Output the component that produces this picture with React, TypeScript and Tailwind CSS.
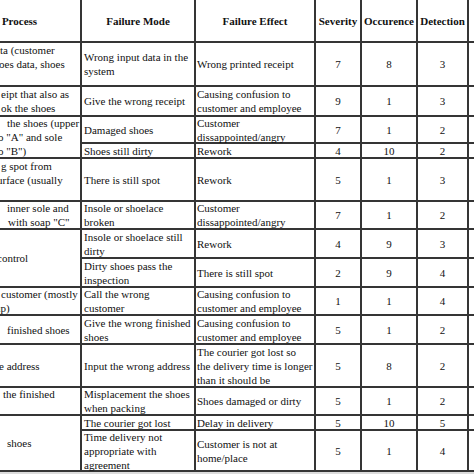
type Sub = {
  mode: string[];
  effect: string[];
  sev: string;
  occ: string;
  det: string;
  h: string;
};

type Line = { t: string; cls: string };

type Group = {
  proc: Line[];
  rows: Sub[];
};

const groups: Group[] = [
  {
    proc: [
      { t: "ta (customer", cls: "ml-[41px]" },
      { t: "oes data, shoes", cls: "ml-[40px]" },
      { t: "\u00a0", cls: "" },
    ],
    rows: [
      { mode: ["Wrong input data in the", "system"], effect: ["Wrong printed receipt"], sev: "7", occ: "8", det: "3", h: "h-[44px]" },
    ],
  },
  {
    proc: [
      { t: "eipt that also as", cls: "ml-[42px]" },
      { t: "ok the shoes", cls: "ml-[42px]" },
    ],
    rows: [
      { mode: ["Give the wrong receipt"], effect: ["Causing confusion to", "customer and employee"], sev: "9", occ: "1", det: "3", h: "h-[30px]" },
    ],
  },
  {
    proc: [
      { t: "the shoes (upper", cls: "ml-[48px]" },
      { t: "o \"A\" and sole", cls: "ml-[39px]" },
      { t: "o \"B\")", cls: "ml-[39px]" },
    ],
    rows: [
      { mode: ["Damaged shoes"], effect: ["Customer", "dissappointed/angry"], sev: "7", occ: "1", det: "2", h: "h-[27px]" },
      { mode: ["Shoes still dirty"], effect: ["Rework"], sev: "4", occ: "10", det: "2", h: "h-[15px]" },
    ],
  },
  {
    proc: [
      { t: "g spot from", cls: "ml-[42px]" },
      { t: "urface (usually", cls: "ml-[38px]" },
      { t: "\u00a0", cls: "" },
    ],
    rows: [
      { mode: ["There is still spot"], effect: ["Rework"], sev: "5", occ: "1", det: "3", h: "h-[43px]" },
    ],
  },
  {
    proc: [
      { t: "inner sole and", cls: "ml-[48px]" },
      { t: "with soap \"C\"", cls: "ml-[49px]" },
    ],
    rows: [
      { mode: ["Insole or shoelace", "broken"], effect: ["Customer", "dissappointed/angry"], sev: "7", occ: "1", det: "2", h: "h-[28px]" },
    ],
  },
  {
    proc: [{ t: "control", cls: "ml-[38px]" }],
    rows: [
      { mode: ["Insole or shoelace still", "dirty"], effect: ["Rework"], sev: "4", occ: "9", det: "3", h: "h-[29px]" },
      { mode: ["Dirty shoes pass the", "inspection"], effect: ["There is still spot"], sev: "2", occ: "9", det: "4", h: "h-[29px]" },
    ],
  },
  {
    proc: [
      { t: "customer (mostly", cls: "ml-[42px]" },
      { t: "up)", cls: "ml-[36px]" },
    ],
    rows: [
      { mode: ["Call the wrong", "customer"], effect: ["Causing confusion to", "customer and employee"], sev: "1", occ: "1", det: "4", h: "h-[28px]" },
    ],
  },
  {
    proc: [{ t: "finished shoes", cls: "ml-[48px]" }],
    rows: [
      { mode: ["Give the wrong finished", "shoes"], effect: ["Causing confusion to", "customer and employee"], sev: "5", occ: "1", det: "2", h: "h-[29px]" },
    ],
  },
  {
    proc: [{ t: "e address", cls: "ml-[40px]" }],
    rows: [
      { mode: ["Input the wrong address"], effect: ["The courier got lost so", "the delivery time is longer", "than it should be"], sev: "5", occ: "8", det: "2", h: "h-[43px]" },
    ],
  },
  {
    proc: [
      { t: "the finished", cls: "ml-[44px]" },
      { t: "\u00a0", cls: "" },
    ],
    rows: [
      { mode: ["Misplacement the shoes", "when packing"], effect: ["Shoes damaged or dirty"], sev: "5", occ: "1", det: "2", h: "h-[28px]" },
    ],
  },
  {
    proc: [{ t: "shoes", cls: "ml-[48px]" }],
    rows: [
      { mode: ["The courier got lost"], effect: ["Delay in delivery"], sev: "5", occ: "10", det: "5", h: "h-[15px]" },
      { mode: ["Time delivery not", "appropriate with", "agreement"], effect: ["Customer is not at", "home/place"], sev: "5", occ: "1", det: "4", h: "h-[41px]" },
    ],
  },
];

const line = "border-[#353535]";

// lines are centred on a zero-height box so that tall text never stretches the row
const Lines = ({ lines }: { lines: Line[] }) => (
  <div className="h-0 flex flex-col justify-center">
    {lines.map((l, i) => (
      <div key={i} className={`whitespace-nowrap ${l.cls}`}>
        {l.t}
      </div>
    ))}
  </div>
);

const TextCell = ({ lines, w, pad }: { lines: string[]; w: string; pad: string }) => (
  <div className={`${w} shrink-0 h-full border-r-2 ${line} flex flex-col justify-center ${pad}`}>
    <Lines lines={lines.map((t) => ({ t, cls: "" }))} />
  </div>
);

const NumCell = ({ v, w }: { v: string; w: string }) => (
  <div className={`${w} shrink-0 h-full border-r-2 ${line} flex items-center justify-center`}>{v}</div>
);

export default function App() {
  return (
    <div className="w-[474px] h-[474px] overflow-hidden bg-white text-[#111] font-['Liberation_Serif','Times_New_Roman',serif] text-[11px] leading-[14px]">
      <div className="w-[515px] -ml-[41px] flex flex-col">
        {/* header */}
        <div className={`flex h-[43px] border-b-2 ${line} font-bold`}>
          <div className={`w-[123px] shrink-0 border-r-2 ${line} flex items-center justify-center`}>Process</div>
          <div className={`w-[114px] shrink-0 border-r-2 ${line} flex items-center justify-center`}>Failure Mode</div>
          <div className={`w-[120px] shrink-0 border-r-2 ${line} flex items-center justify-center`}>Failure Effect</div>
          <div className={`w-[46px] shrink-0 border-r-2 ${line} flex items-center justify-center`}>Severity</div>
          <div className={`w-[56px] shrink-0 border-r-2 ${line} flex items-center justify-center`}>Occurence</div>
          <div className={`w-[51px] shrink-0 border-r-2 ${line} flex items-center justify-center`}>Detection</div>
          <div className="flex-1" />
        </div>

        {groups.map((g, gi) => (
          <div key={gi} className="flex">
            <div className={`w-[123px] shrink-0 border-r-2 border-b-2 ${line} flex flex-col justify-center`}>
              <Lines lines={g.proc} />
            </div>
            <div className="flex-1 flex flex-col">
              {g.rows.map((r, ri) => (
                <div key={ri} className={`${r.h} flex border-b-2 ${line}`}>
                  <TextCell lines={r.mode} w="w-[114px]" pad="pl-[2px]" />
                  <TextCell lines={r.effect} w="w-[120px]" pad="pl-[1px]" />
                  <NumCell v={r.sev} w="w-[46px]" />
                  <NumCell v={r.occ} w="w-[56px]" />
                  <NumCell v={r.det} w="w-[51px]" />
                  <div className="flex-1" />
                </div>
              ))}
            </div>
          </div>
        ))}
        <div className="h-[4px] bg-[#dcdcdc]" />
      </div>
    </div>
  );
}
